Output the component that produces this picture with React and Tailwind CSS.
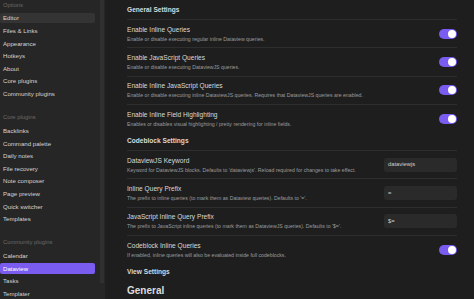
import React from 'react';

const groups = [
  { title: 'Options', items: ['Editor', 'Files & Links', 'Appearance', 'Hotkeys', 'About', 'Core plugins', 'Community plugins'] },
  { title: 'Core plugins', items: ['Backlinks', 'Command palette', 'Daily notes', 'File recovery', 'Note composer', 'Page preview', 'Quick switcher', 'Templates'] },
  { title: 'Community plugins', items: ['Calendar', 'Dataview', 'Tasks', 'Templater'] },
];

function Toggle() {
  return (
    <div className="flex h-[10px] w-[18px] shrink-0 items-center justify-end rounded-full bg-[#7b5cf0] px-px">
      <div className="h-[8px] w-[8px] rounded-full bg-white" />
    </div>
  );
}

function TextInput({ value }) {
  return (
    <div className="flex h-[14px] w-[73px] shrink-0 items-center rounded-[3px] bg-[#2a2a2a] px-[4px] text-[5.8px] text-[#d0d0d0]">
      {value}
    </div>
  );
}

function Item({ title, desc, control }) {
  return (
    <div className="flex h-[28.3px] items-center border-t border-[#2e2e2e]">
      <div className="flex-1">
        <div className="h-[9px] text-[6.6px] leading-[9px] text-[#dadada]">{title}</div>
        <div className="mt-px h-[8px] text-[5.2px] leading-[8px] text-[#9c9c9c] whitespace-nowrap">{desc}</div>
      </div>
      {control}
    </div>
  );
}

function Heading({ children }) {
  return (
    <div className="flex h-[18px] items-center text-[6.6px] font-bold text-[#dadada]">{children}</div>
  );
}

export default function App() {
  return (
    <div className="flex h-[299px] w-[474px] overflow-hidden bg-[#1e1e1e]" style={{ fontFamily: '"Liberation Sans", Arial, sans-serif' }}>
      <div className="flex w-[105px] shrink-0 bg-[#262626]">
        <div className="mt-[-1.7px] w-[96px]">
          {groups.map((g, gi) => (
            <div key={g.title} className={gi > 0 ? 'mt-[11px]' : ''}>
              <div className="flex h-[13.4px] items-center pl-[3px] text-[5.8px] text-[#6a6a6a]">{g.title}</div>
              {g.items.map((it) => {
                const sel = it === 'Editor' ? 'bg-[#343434]' : it === 'Dataview' ? 'bg-[#7b5cf0] text-white' : '';
                return (
                  <div key={it} className="flex h-[12.6px] items-center">
                    <div className={`flex h-[10.6px] w-[95px] items-center rounded-[2px] pl-[3px] text-[6.1px] text-[#d4d4d4] ${sel}`}>{it}</div>
                  </div>
                );
              })}
            </div>
          ))}
        </div>
        <div className="ml-[4px] h-[283px] w-[4px] bg-[#303030]" />
      </div>
      <div className="flex-1 pl-[22px] pr-[17px] pt-px">
        <Heading>General Settings</Heading>
        <Item title="Enable Inline Queries" desc="Enable or disable executing regular inline Dataview queries." control={<Toggle />} />
        <Item title="Enable JavaScript Queries" desc="Enable or disable executing DataviewJS queries." control={<Toggle />} />
        <Item title="Enable Inline JavaScript Queries" desc="Enable or disable executing inline DataviewJS queries. Requires that DataviewJS queries are enabled." control={<Toggle />} />
        <Item title="Enable Inline Field Highlighting" desc="Enables or disables visual highlighting / pretty rendering for inline fields." control={<Toggle />} />
        <Heading>Codeblock Settings</Heading>
        <Item title="DataviewJS Keyword" desc="Keyword for DataviewJS blocks. Defaults to 'dataviewjs'. Reload required for changes to take effect." control={<TextInput value="dataviewjs" />} />
        <Item title="Inline Query Prefix" desc="The prefix to inline queries (to mark them as Dataview queries). Defaults to '='." control={<TextInput value="=" />} />
        <Item title="JavaScript Inline Query Prefix" desc="The prefix to JavaScript inline queries (to mark them as DataviewJS queries). Defaults to '$='." control={<TextInput value="$=" />} />
        <Item title="Codeblock Inline Queries" desc="If enabled, inline queries will also be evaluated inside full codeblocks." control={<Toggle />} />
        <Heading>View Settings</Heading>
        <div className="flex h-[18px] items-center text-[10px] font-semibold text-[#dcdcdc]">General</div>
      </div>
    </div>
  );
}
